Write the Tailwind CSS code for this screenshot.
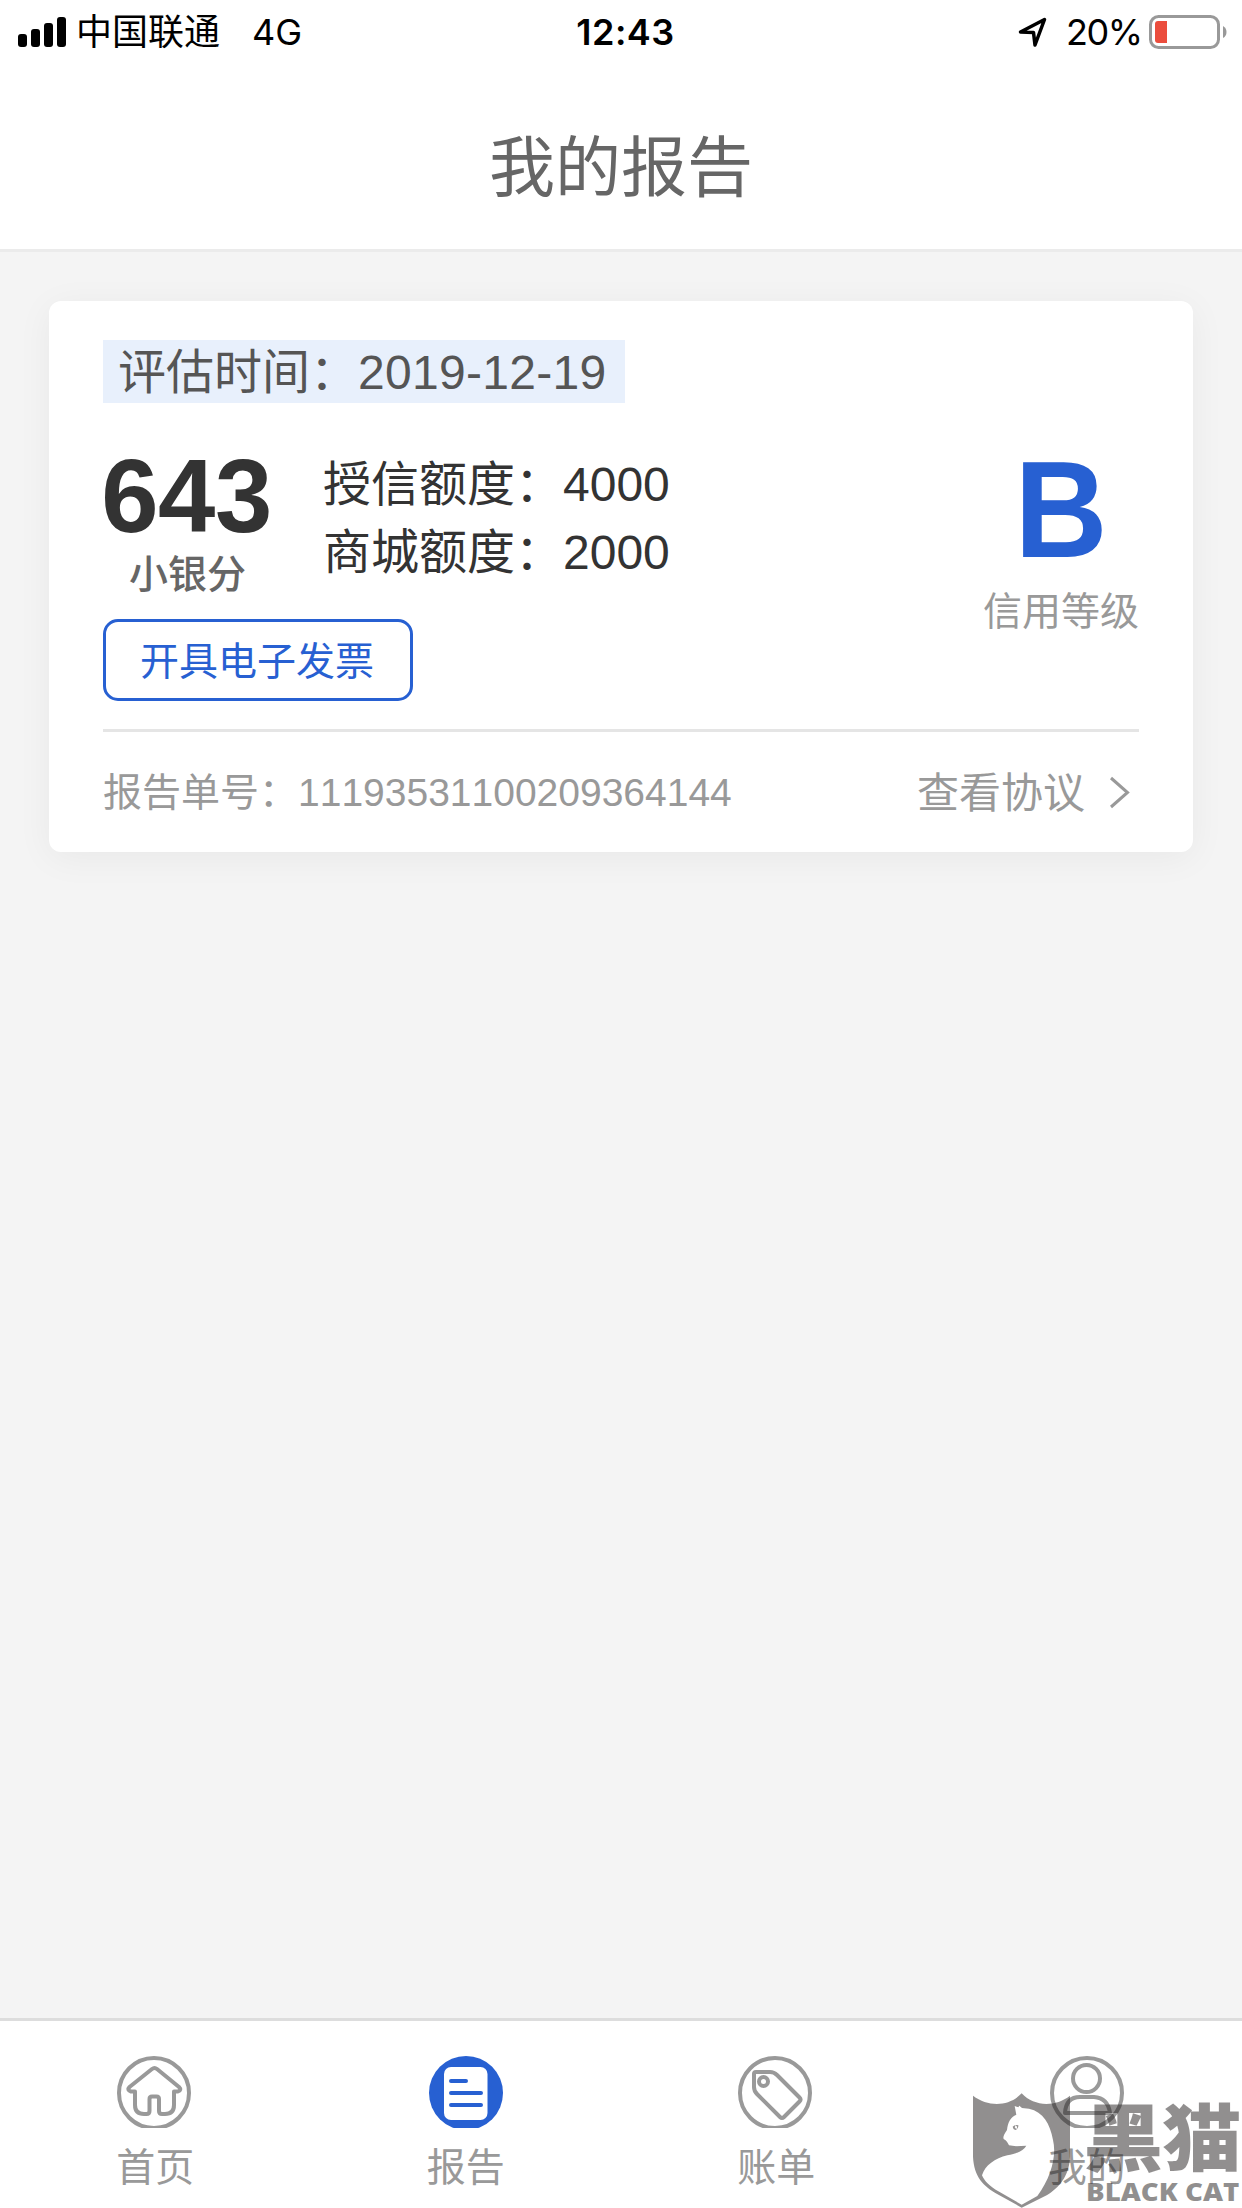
<!DOCTYPE html>
<html lang="zh-CN">
<head>
    <meta charset="UTF-8">
    <meta name="viewport" content="width=device-width, initial-scale=1.0">
    <title>我的报告</title>
    <script src="https://cdn.jsdelivr.net/npm/@tailwindcss/browser@4"></script>
    <style>
        body { font-family: 'Liberation Sans', 'Noto Sans CJK SC', sans-serif; font-kerning: none; }
        .status-font { font-family: 'Inter', 'Noto Sans CJK SC', sans-serif; }
    </style>
</head>
<body class="bg-[#f4f4f4] text-[#333]">
<div class="relative flex flex-col w-[1242px] h-[2208px] overflow-hidden">

    <header class="bg-white border-b-3 border-[#ebebeb] h-[252px]">
        <!-- Status bar -->
        <div class="status-font grid grid-cols-3 items-center h-[62px] text-4xl leading-[62px] text-black">
            <div class="flex items-center pl-[18px]">
                <svg class="w-[48px] h-[30px]" viewBox="0 0 48 30">
                    <rect x="0" y="17" width="9" height="13" rx="3"/>
                    <rect x="13" y="12" width="9" height="18" rx="3"/>
                    <rect x="26" y="6" width="9" height="24" rx="3"/>
                    <rect x="39" y="0" width="9" height="30" rx="3"/>
                </svg>
                <span class="ml-[10px] pt-px">中国联通</span>
                <span class="ml-[32px] pt-px">4G</span>
            </div>
            <div class="pl-[9px] pt-px text-center font-semibold tracking-[0.5px]">12:43</div>
            <div class="flex items-center justify-end pr-[14px]">
                <svg class="w-[30px] h-[30px] mr-[18px]" viewBox="0 0 30 30" fill="none" stroke="#000" stroke-width="3.5" stroke-linejoin="round">
                    <path d="M2.500 15 L26.500 2.500 L17 28 L15.500 15.500 Z"/>
                </svg>
                <span class="w-[74px] pt-px whitespace-nowrap tracking-[-1.5px]">20%</span>
                <svg class="ml-[9px] w-[79px] h-[34px]" viewBox="0 0 79 34">
                    <rect x="1.5" y="1.5" width="68" height="31" rx="8" fill="none" stroke="#999" stroke-width="3"/>
                    <path d="M9 6 H18 V28 H9 Q6 28 6 25 V9 Q6 6 9 6Z" fill="#eb4d3d"/>
                    <path d="M74 11 Q77.500 13 77.500 17 Q77.500 21 74 23Z" fill="#999"/>
                </svg>
            </div>
        </div>
        <h1 class="mt-[56px] text-center text-[66px] leading-[100px] text-[#666]">我的报告</h1>
    </header>

    <main class="grow px-[49px] pt-[49px]">
        <section class="bg-white rounded-xl h-[551px] px-[54px] pt-[39px] shadow-[0_6px_36px_rgba(0,0,0,0.05)]">
            <div class="w-[522px] h-[63px] bg-[#e8f0fc] pl-[15px] text-5xl leading-[66px] text-[#555] whitespace-nowrap">评估时间：<span class="tracking-[0.3px]">2019-12-19</span></div>

            <div class="flex items-start mt-[40px] h-[286px]">
                <div class="w-[220px]">
                    <div class="w-[169px] mt-[3px] text-center">
                        <div class="-ml-[2px] text-[103px] leading-[102px] font-bold tracking-[-0.5px]">643</div>
                        <div class="text-[39px] leading-[54px] font-medium text-[#666]">小银分</div>
                    </div>
                    <button class="block mt-[17px] w-[310px] h-[82px] border-3 border-[#2760d2] rounded-[15px] pt-[3px] pr-[2px] text-[39px] leading-[73px] text-[#2760d2]">开具电子发票</button>
                </div>
                <div class="mt-[8px] text-5xl leading-[68px]">
                    <div>授信额度：4000</div>
                    <div>商城额度：2000</div>
                </div>
                <div class="ml-auto w-[156px] text-center">
                    <div class="scale-x-94 text-[137px] leading-[134px] font-bold text-[#2760d2]">B</div>
                    <div class="text-[39px] leading-[70px] text-[#999]">信用等级</div>
                </div>
            </div>

            <div class="flex items-center justify-between h-[123px] border-t-3 border-[#e5e5e5] text-[#999]">
                <div class="pt-[2px] text-[39px]">报告单号：11193531100209364144</div>
                <div class="flex items-center text-[42px]">
                    <span class="pt-[2px]">查看协议</span>
                    <svg class="w-[21px] h-[33px] ml-[24px] mr-[9px]" viewBox="0 0 21 33" fill="none" stroke="#999" stroke-width="3">
                        <path d="M2 2 L18.500 16.500 L2 31"/>
                    </svg>
                </div>
            </div>
        </section>
    </main>

    <!-- Bottom tabs -->
    <nav class="grid grid-cols-4 h-[190px] bg-white border-t-3 border-[#ddd] pt-[35px] text-[39px] leading-[56px] text-[#999]">
        <a href="#" class="flex flex-col items-center">
            <svg class="w-[74px] h-[72px] mr-[2px]" viewBox="0 0 74 72" fill="none" stroke="#999" stroke-width="4" stroke-linejoin="round" stroke-linecap="round">
                <circle cx="37" cy="37" r="35"/>
                <path d="M18 35.500 H14 Q9.500 34 12.500 31 L35 13 Q37.500 11 40 13 L62 31 Q65 34 61 35.500 H57 V49 Q57 58 48 58 H45 Q42 58 42 55 V43 Q42 40.500 39.500 40.500 H35 Q32.500 40.500 32.500 43 V55 Q32.500 58 29.500 58 H27 Q18 58 18 49 Z"/>
            </svg>
            <span class="mt-[12px]">首页</span>
        </a>
        <a href="#" class="flex flex-col items-center">
            <svg class="w-[74px] h-[72px]" viewBox="0 0 74 72">
                <circle cx="37" cy="37" r="37" fill="#2760d2"/>
                <rect x="15" y="11" width="43.500" height="53" rx="7" fill="#fff"/>
                <path d="M22 25 H37 M22 37 H52 M22 49 H52" stroke="#2760d2" stroke-width="4" stroke-linecap="round"/>
            </svg>
            <span class="mt-[12px]">报告</span>
        </a>
        <a href="#" class="flex flex-col items-center">
            <svg class="w-[74px] h-[72px] mr-[2px]" viewBox="0 0 74 72" fill="none" stroke="#999" stroke-width="4" stroke-linejoin="round">
                <circle cx="37" cy="37" r="35"/>
                <path d="M18 16 H32 Q36 16 39 19 L61.500 41.500 Q63.500 43.500 61.500 45.500 L46 61 Q44 63 42 61 L19 38 Q16 35 16 31 V18 Q16 16 18 16Z"/>
                <circle cx="25.500" cy="25.500" r="4.500"/>
            </svg>
            <span class="mt-[12px]">账单</span>
        </a>
        <a href="#" class="flex flex-col items-center">
            <svg class="w-[74px] h-[72px]" viewBox="0 0 74 72" fill="none" stroke="#999" stroke-width="4" stroke-linejoin="round">
                <circle cx="37" cy="37" r="35"/>
                <circle cx="36.500" cy="22.500" r="13.500"/>
                <path d="M15 57 Q16 41 30 41 H44 Q58 42 60 57 Z"/>
            </svg>
            <span class="mt-[12px]">我的</span>
        </a>
    </nav>

    <!-- Watermark -->
    <svg class="absolute left-[950px] top-[2030px] w-[292px] h-[178px]" viewBox="0 0 876 534" fill="#231f20" fill-opacity="0.5">
        <path fill-rule="evenodd" d="M69 197 C115 232 178 230 215 190 C252 230 315 232 360 197 V380 C358 440 325 474 290 496 L215 533 L140 491 C100 468 72 440 69 380 Z
            M96 436 C102 452 120 470 145 484 L215 524 L262 498 C305 440 320 375 309 330 C300 280 280 246 237 236 L216 234 L208 227 L205 232 L194 228 L199 254 C182 262 174 275 171 300 C163 312 158 320 161 327 C170 332 173 338 177 346 C192 350 209 348 229 347 C221 361 202 371 172 376 C135 385 105 406 96 436 Z"/>
        <path d="M188 290 Q195 282 205 286 Q206 298 196 300 Q189 298 188 290Z M197 286 L194 292 L199 298 L202 291Z" fill-rule="evenodd"/>
        <g font-family="'Noto Sans CJK SC', sans-serif" font-weight="900" font-size="218">
            <text x="400" y="404" textLength="240" lengthAdjust="spacingAndGlyphs">黑</text>
            <text x="637" y="404" textLength="238" lengthAdjust="spacingAndGlyphs">猫</text>
        </g>
        <text x="408" y="512" font-family="'Open Sans', sans-serif" font-weight="800" font-size="73" textLength="460" lengthAdjust="spacingAndGlyphs">BLACK CAT</text>
    </svg>
</div>
</body>
</html>
